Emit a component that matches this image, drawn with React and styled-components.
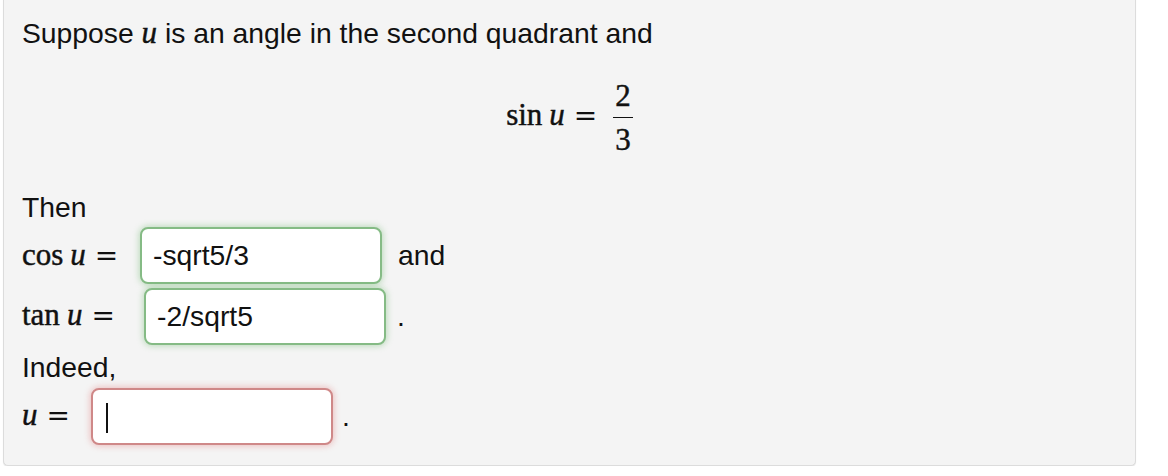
import React from 'react';
import styled, { createGlobalStyle } from 'styled-components';

const GlobalStyle = createGlobalStyle`
  html, body {
    margin: 0;
    padding: 0;
    background: #ffffff;
    overflow: hidden;
  }
`;

const Panel = styled.div`
  margin: -12px 32px 0 3px;
  box-sizing: border-box;
  height: 478px;
  background: #f4f4f4;
  border: 1px solid #dcdcdc;
  border-radius: 5px;
  box-shadow: 0 1px 1px rgba(0, 0, 0, 0.1);
  padding: 28px 18px 0 18px;
  font-family: "Liberation Sans", Arial, sans-serif;
  font-size: 28.3px;
  color: #111;
`;

const Line = styled.div`
  line-height: 32px;
  height: 32px;
  margin-top: ${(p) => p.mt || 0}px;
`;

const MathText = styled.span`
  font-family: "Liberation Serif", "Times New Roman", serif;
  font-size: 31px;
  color: #111;
  -webkit-text-stroke: 0.45px #111;
`;

const Var = styled.i`
  font-family: "Liberation Serif", "Times New Roman", serif;
  font-style: italic;
  margin: 0 ${(p) => p.mr || 0}px 0 ${(p) => p.ml || 0}px;
`;

const Eq = styled.span`
  font-family: "DejaVu Serif", serif;
  font-size: 28px;
  -webkit-text-stroke: 0;
  margin: 0 ${(p) => p.right || 6}px 0 ${(p) => p.left || 9}px;
`;

const Display = styled.div`
  margin-top: 37px;
  display: flex;
  justify-content: center;
  align-items: center;
  height: 78px;
`;

const DisplayLead = styled(MathText)`
  margin-bottom: 20px;
`;

const Frac = styled.span`
  display: inline-flex;
  flex-direction: column;
  align-items: center;
  margin-left: 8px;
  margin-top: -14px;
`;

const FracNum = styled.span`
  line-height: 30px;
  padding: 0 2px;
`;

const FracBar = styled.span`
  align-self: stretch;
  height: 1.5px;
  background: #111;
  margin: 3px 0 4px;
`;

const Row = styled.div`
  display: flex;
  align-items: center;
  height: ${(p) => p.h}px;
  margin-top: ${(p) => p.mt || 0}px;
`;

const Label = styled(MathText)`
  display: inline-block;
  min-width: ${(p) => p.w}px;
  padding-bottom: 2px;
`;

const Field = styled.div`
  box-sizing: border-box;
  width: 242px;
  height: ${(p) => p.h || 57}px;
  background: #fff;
  border: 2px solid ${(p) => (p.status === 'bad' ? '#cf8888' : '#85bb85')};
  border-radius: 8px;
  box-shadow: 0 0 6px 1px ${(p) => (p.status === 'bad' ? 'rgba(225, 110, 110, 0.4)' : 'rgba(100, 180, 100, 0.4)')};
  display: flex;
  align-items: center;
  padding: 0 11px;
  font-size: 28.3px;
  color: #111;
`;

const Caret = styled.span`
  display: inline-block;
  width: 2px;
  height: 30px;
  background: #111;
  margin-left: 2px;
  margin-top: 4px;
`;

const After = styled.span`
  margin-left: ${(p) => p.ml || 16}px;
`;

const App = () => {
  return (
    <>
      <GlobalStyle />
      <Panel>
        <Line>
          Suppose <MathText><Var>u</Var></MathText> is an angle in the second quadrant and
        </Line>
        <Display>
          <DisplayLead>
            sin<Var ml={7}>u</Var>
            <Eq right={8}>=</Eq>
          </DisplayLead>
          <Frac>
            <MathText><FracNum>2</FracNum></MathText>
            <FracBar />
            <MathText><FracNum>3</FracNum></MathText>
          </Frac>
        </Display>
        <Line mt={27}>Then</Line>
        <Row h={57} mt={4}>
          <Label w={118}>cos<Var ml={7}>u</Var><Eq>=</Eq></Label>
          <Field status="ok">-sqrt5/3</Field>
          <After ml={16}>and</After>
        </Row>
        <Row h={58} mt={3}>
          <Label w={122}>tan<Var ml={7}>u</Var><Eq>=</Eq></Label>
          <Field status="ok">-2/sqrt5</Field>
          <After ml={11}>.</After>
        </Row>
        <Line mt={6}>Indeed,</Line>
        <Row h={58} mt={4}>
          <Label w={69}><Var>u</Var><Eq>=</Eq></Label>
          <Field status="bad"><Caret /></Field>
          <After ml={9}>.</After>
        </Row>
      </Panel>
    </>
  );
};

export default App;
